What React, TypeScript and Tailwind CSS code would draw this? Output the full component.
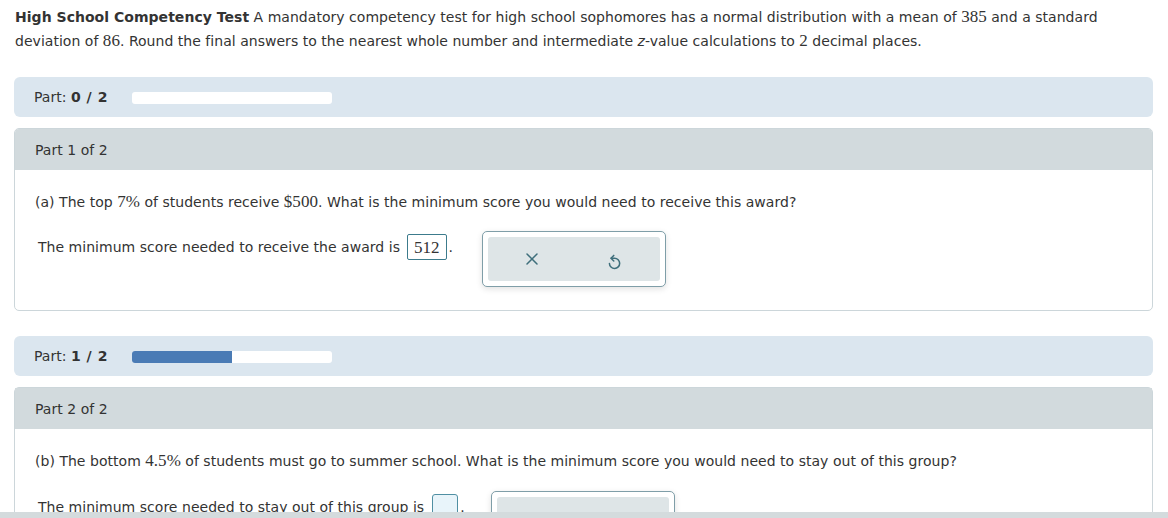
import React from 'react'

const UndoIcon = () => (
  <svg width="18" height="20" viewBox="0 0 16 18" fill="none" stroke="#3f6f7c" strokeWidth="1.4" strokeLinecap="round" strokeLinejoin="round">
    <path d="M5.5 6.5 H8.5 A4.6 4.6 0 1 1 3.9 11.2" />
    <path d="M7.8 4 L5.3 6.5 L7.8 9" />
  </svg>
)

const XIcon = () => (
  <svg width="14" height="14" viewBox="0 0 14 14" fill="none" stroke="#3f6f7c" strokeWidth="1.5" strokeLinecap="round">
    <path d="M2 2 L12 12 M12 2 L2 12" />
  </svg>
)

const M = ({ children }: { children: React.ReactNode }) => (
  <span className="font-['Liberation_Serif',serif] text-[17px] leading-none">{children}</span>
)

const ProgressBar = ({ done, total }: { done: number; total: number }) => (
  <div className="flex items-center h-10 rounded-[6px] bg-[#dbe6ef] pl-5 pt-px">
    <span className="w-[98px]">
      Part: <b className="tracking-[0.5px]">{done} / {total}</b>
    </span>
    <div className="w-[200px] h-3 rounded-[3px] bg-white overflow-hidden">
      <div className="h-full bg-[#4a7bb5]" style={{ width: `${(done / total) * 100}%` }}></div>
    </div>
  </div>
)

const ActionBox = ({ faded }: { faded?: boolean }) => (
  <div className="w-[184px] h-[56px] rounded-[5px] border border-[#7f9ea8] bg-white p-[5px] shadow-[0_2px_6px_rgba(0,0,0,0.12)]">
    <div className="flex h-full items-center rounded-[3px] bg-[#dee5e7]">
      <div className="flex-1 flex justify-center pl-[3px]">
        {!faded && <XIcon />}
      </div>
      <div className="flex-1 flex justify-center pr-[5px] pt-[3px]">
        {!faded && <UndoIcon />}
      </div>
    </div>
  </div>
)

const App = () => {
  return (
    <div className="relative h-[518px] overflow-hidden bg-white text-[#333] font-['DejaVu_Sans',Verdana,sans-serif] text-[14px] tracking-[0.03px] px-[14px]">
      <p className="pl-px pt-[5px] leading-[24px]">
        <b>High School Competency Test</b> A mandatory competency test for high school sophomores has a normal distribution with a mean of <M>385</M> and a standard deviation of <M>86</M>. Round the final answers to the nearest whole number and intermediate <i>z</i>-value calculations to <M>2</M> decimal places.
      </p>

      <div className="mt-[24px] w-[1139px]">
        <ProgressBar done={0} total={2} />

        <div className="mt-[11px] rounded-[5px] border border-[#ccd6da] overflow-hidden">
          <div className="h-[41px] bg-[#d2dadd] flex items-center pl-5 pt-px">Part 1 of 2</div>
          <div className="h-[140px] pl-5 pt-[22px]">
            <p>
              (a) The top <M>7%</M> of students receive <M>$500</M>. What is the minimum score you would need to receive this award?
            </p>
            <div className="mt-[18px] flex items-start pl-[3px]">
              <div className="flex items-center pt-[3px]">
                <span>The minimum score needed to receive the award is</span>
                <span className="ml-[7px] flex items-center h-[26px] px-[6px] rounded-[2px] border border-[#3c7b8c]">
                  <M>512</M>
                </span>
                <span className="ml-[2px]">.</span>
              </div>
              <div className="ml-[29px]">
                <ActionBox />
              </div>
            </div>
          </div>
        </div>

        <div className="mt-[25px]">
          <ProgressBar done={1} total={2} />
        </div>

        <div className="mt-[11px] rounded-t-[5px] border border-[#ccd6da]">
          <div className="h-[41px] bg-[#d2dadd] flex items-center pl-5 pt-px">Part 2 of 2</div>
          <div className="h-[141px] pl-5 pt-[22px]">
            <p>
              (b) The bottom <M>4.5%</M> of students must go to summer school. What is the minimum score you would need to stay out of this group?
            </p>
            <div className="mt-[19px] flex items-start pl-[3px]">
              <div className="flex items-center pt-[3px]">
                <span>The minimum score needed to stay out of this group is</span>
                <span className="ml-[8px] w-[26px] h-[26px] rounded-[3px] border border-[#4f8fa3] bg-[#e8f4fa]"></span>
                <span className="ml-[2px]">.</span>
              </div>
              <div className="ml-[26px]">
                <ActionBox faded />
              </div>
            </div>
          </div>
        </div>
      </div>

      {/* horizontal scrollbar strip */}
      <div className="absolute left-0 right-0 bottom-0 h-[6px] bg-[#d4dbdd]"></div>
    </div>
  )
}

export default App
